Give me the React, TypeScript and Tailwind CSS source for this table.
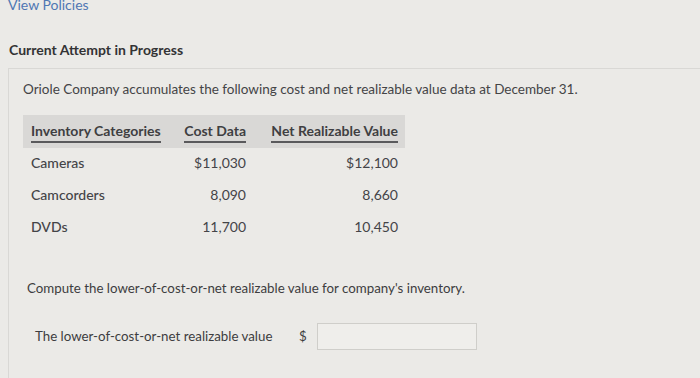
import React from "react";

const rows = [
  { name: "Cameras", cost: "$11,030", nrv: "$12,100" },
  { name: "Camcorders", cost: "8,090", nrv: "8,660" },
  { name: "DVDs", cost: "11,700", nrv: "10,450" },
];

export default function App() {
  return (
    <div
      className="w-[700px] h-[378px] overflow-hidden bg-[#ebeae7] text-[#3d3d3f]"
      style={{ fontFamily: "Lato, 'Open Sans', sans-serif" }}
    >
      <div className="pl-[8px] mt-[-5px] h-[20px] text-[14px] leading-[20px] text-[#4f77b3]">
        View Policies
      </div>
      <div className="pl-[9px] mt-[25px] h-[20px] text-[14px] leading-[20px] font-bold text-[#333335]">
        Current Attempt in Progress
      </div>
      <div className="ml-[8px] mt-[8px] h-[320px] border-t border-l border-[#d9d8d5] pt-[10px]">
        <div className="pl-[14px] text-[13.5px] leading-[20px] text-[#444446]">
          Oriole Company accumulates the following cost and net realizable value data at December 31.
        </div>

        <div className="ml-[14px] mt-[16px] w-[382px] text-[14px]">
          <div className="grid grid-cols-[150px_80px_152px] h-[33px] bg-[#d9d8d6] items-center font-bold text-[#3f3f42]">
            <div className="pl-[8px]">
              <span className="inline-block leading-[16px] pb-[2px] border-b-2 border-[#5a5a5c]">
                Inventory Categories
              </span>
            </div>
            <div className="pr-[7px] text-right">
              <span className="inline-block leading-[16px] pb-[2px] border-b-2 border-[#5a5a5c]">
                Cost Data
              </span>
            </div>
            <div className="pr-[7px] text-right">
              <span className="inline-block leading-[16px] pb-[2px] border-b-2 border-[#5a5a5c]">
                Net Realizable Value
              </span>
            </div>
          </div>
          {rows.map((r) => (
            <div
              key={r.name}
              className="grid grid-cols-[150px_80px_152px] h-[32px] pb-[3px] items-center text-[#444447]"
            >
              <div className="pl-[8px] font-medium">{r.name}</div>
              <div className="pr-[7px] text-right">{r.cost}</div>
              <div className="pr-[7px] text-right">{r.nrv}</div>
            </div>
          ))}
        </div>

        <div className="pl-[18px] mt-[34px] text-[13.3px] leading-[20px] text-[#3d3d40]">
          Compute the lower-of-cost-or-net realizable value for company's inventory.
        </div>

        <div className="pl-[26px] mt-[25px] flex items-center text-[13.3px] text-[#3d3d40]">
          <span className="w-[264px]">The lower-of-cost-or-net realizable value</span>
          <span className="w-[18px]">$</span>
          <div className="w-[160px] h-[27px] border border-[#cfceca] bg-[#efeeeb]" />
        </div>
      </div>
    </div>
  );
}
